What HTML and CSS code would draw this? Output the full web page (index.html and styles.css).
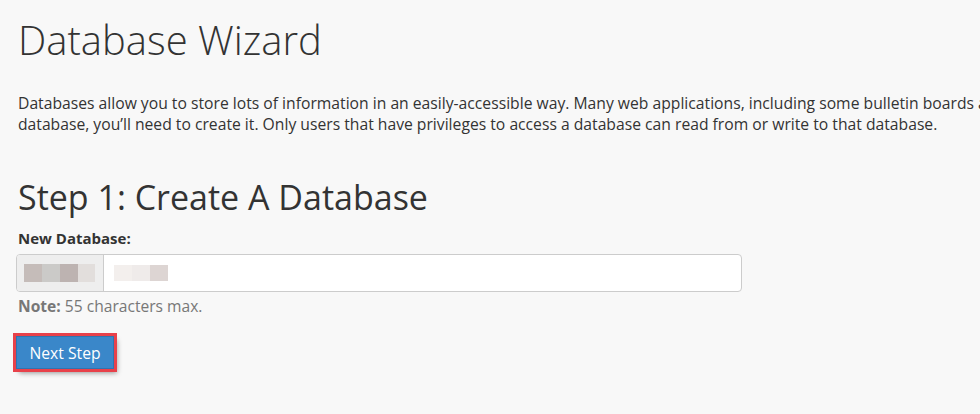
FILE: index.html
```html
<!DOCTYPE html>
<html>
<head>
<meta charset="utf-8">
<link rel="stylesheet" href="styles.css">
</head>
<body>
<div class="page">
  <h1 class="title">Database Wizard</h1>
  <p class="intro">Databases allow you to store lots of information in an easily-accessible way. Many web applications, including some bulletin boards and content management systems, require a database to store their data. Before you can use a<br>database, you’ll need to create it. Only users that have privileges to access a database can read from or write to that database.</p>
  <h2 class="step">Step 1: Create A Database</h2>
  <label class="label">New Database:</label>
  <div class="input-group">
    <div class="addon">
      <span class="blur b1"></span><span class="blur b2"></span><span class="blur b3"></span><span class="blur b4"></span>
    </div>
    <div class="field">
      <span class="blur c1"></span><span class="blur c2"></span><span class="blur c3"></span>
    </div>
  </div>
  <p class="note"><strong>Note:</strong> 55 characters max.</p>
  <div class="btn-wrap"><button class="btn">Next Step</button></div>
</div>
</body>
</html>
```
FILE: styles.css
```css
html {
  overflow: hidden;
  background: #f8f8f8;
}
body {
  margin: 0;
  padding: 0;
  background: #f8f8f8;
  font-family: "Open Sans", "Noto Sans", sans-serif;
  color: #333;
}
.page {
  padding: 0 0 20px 18px;
}
.title {
  font-weight: 300;
  font-size: 40px;
  line-height: 48px;
  margin: 0;
  padding-top: 15.5px;
  color: #333;
}
.intro {
  font-size: 15.7px;
  line-height: 21px;
  margin: 29px 0 0 0;
  white-space: nowrap;
}
.step {
  font-weight: 400;
  font-size: 34px;
  line-height: 40px;
  margin: 42.6px 0 0 0;
  color: #333;
}
.label {
  display: block;
  font-size: 15px;
  line-height: 20px;
  font-weight: 700;
  margin-top: 10.5px;
}
.input-group {
  display: flex;
  width: 726px;
  height: 38px;
  margin-top: 6px;
  margin-left: -2px;
  box-sizing: border-box;
  border: 1px solid #ccc;
  border-radius: 4px;
  overflow: hidden;
  background: #fff;
}
.addon {
  box-sizing: border-box;
  width: 87px;
  background: #eee;
  border-right: 1px solid #ccc;
  display: flex;
  align-items: center;
  padding-left: 7px;
}
.field {
  flex: 1;
  display: flex;
  align-items: center;
  padding-left: 10px;
}
.blur {
  display: inline-block;
  width: 18px;
  height: 18px;
}
.b1 { background: #c5bcb9; }
.b2 { background: #cbcac8; }
.b3 { background: #bdb3b1; }
.b4 { background: #e2dedc; width: 17px; }
.c1 { background: #f3efed; height: 16px; }
.c2 { background: #efebea; height: 16px; }
.c3 { background: #ddd5d3; height: 16px; }
.note {
  font-size: 15.6px;
  line-height: 21px;
  color: #777;
  margin: 4.4px 0 0 0;
}
.note strong {
  font-weight: 700;
}
.btn-wrap {
  margin-top: 19.5px;
  margin-left: -5px;
}
.btn {
  display: block;
  font-family: "Open Sans", "Noto Sans", sans-serif;
  font-size: 15.7px;
  color: #fff;
  background: #3a87c9;
  border: 1px solid #2f74b0;
  border-radius: 0;
  width: 98px;
  height: 33px;
  padding: 0;
  outline: 3px solid #e8414a;
  outline-offset: 0;
  box-shadow: 3px 4px 5px rgba(0,0,0,0.4);
  margin-left: 3px;
  margin-top: 3px;
}
```
